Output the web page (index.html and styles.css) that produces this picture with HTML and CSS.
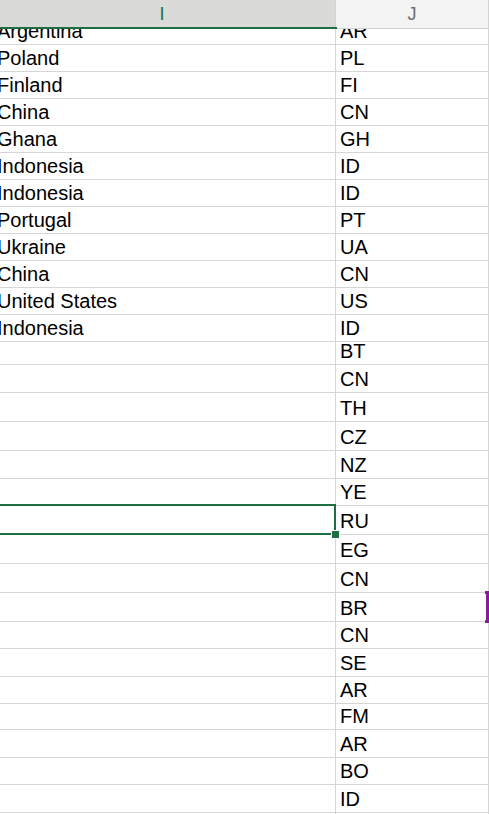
FILE: index.html
```html
<!DOCTYPE html>
<html>
<head>
<meta charset="utf-8">
<link rel="stylesheet" href="styles.css">
</head>
<body>
<div class="sheet">
  <div class="hdr">
    <div class="hcell hsel">I</div>
    <div class="hcell">J</div>
  </div>
  <div class="body">
    <div class="row r16"><div class="cell ci">Argentina</div><div class="cell">AR</div></div>
    <div class="row"><div class="cell ci">Poland</div><div class="cell">PL</div></div>
    <div class="row"><div class="cell ci">Finland</div><div class="cell">FI</div></div>
    <div class="row"><div class="cell ci">China</div><div class="cell">CN</div></div>
    <div class="row"><div class="cell ci">Ghana</div><div class="cell">GH</div></div>
    <div class="row"><div class="cell ci">Indonesia</div><div class="cell">ID</div></div>
    <div class="row"><div class="cell ci">Indonesia</div><div class="cell">ID</div></div>
    <div class="row"><div class="cell ci">Portugal</div><div class="cell">PT</div></div>
    <div class="row"><div class="cell ci">Ukraine</div><div class="cell">UA</div></div>
    <div class="row"><div class="cell ci">China</div><div class="cell">CN</div></div>
    <div class="row"><div class="cell ci">United States</div><div class="cell">US</div></div>
    <div class="row"><div class="cell ci">Indonesia</div><div class="cell">ID</div></div>
    <div class="row r23"><div class="cell ci"></div><div class="cell">BT</div></div>
    <div class="row r28"><div class="cell ci"></div><div class="cell">CN</div></div>
    <div class="row r29"><div class="cell ci"></div><div class="cell">TH</div></div>
    <div class="row r29"><div class="cell ci"></div><div class="cell">CZ</div></div>
    <div class="row r28"><div class="cell ci"></div><div class="cell">NZ</div></div>
    <div class="row"><div class="cell ci"></div><div class="cell">YE</div></div>
    <div class="row r29"><div class="cell ci"></div><div class="cell">RU</div></div>
    <div class="row r29"><div class="cell ci"></div><div class="cell">EG</div></div>
    <div class="row r29"><div class="cell ci"></div><div class="cell">CN</div></div>
    <div class="row r29"><div class="cell ci"></div><div class="cell">BR</div></div>
    <div class="row"><div class="cell ci"></div><div class="cell">CN</div></div>
    <div class="row r28"><div class="cell ci"></div><div class="cell">SE</div></div>
    <div class="row"><div class="cell ci"></div><div class="cell">AR</div></div>
    <div class="row r26"><div class="cell ci"></div><div class="cell">FM</div></div>
    <div class="row r28"><div class="cell ci"></div><div class="cell">AR</div></div>
    <div class="row"><div class="cell ci"></div><div class="cell">BO</div></div>
    <div class="row r28"><div class="cell ci"></div><div class="cell">ID</div></div>
    <div class="row"><div class="cell ci"></div><div class="cell"></div></div>

    <div class="selection"><div class="handle"></div></div>
  </div>
  <div class="cursor"></div>
</div>
</body>
</html>
```
FILE: styles.css
```css
html, body {
  margin: 0;
  padding: 0;
  background: #ffffff;
}

.sheet {
  position: relative;
  width: 489px;
  height: 814px;
  overflow: hidden;
  font-family: "Liberation Sans", Arial, sans-serif;
}

.hdr,
.row {
  display: grid;
  grid-template-columns: 347px 153px;
  margin-left: -11px;
}

.hdr {
  position: relative;
  height: 29px;
}

.hcell {
  box-sizing: border-box;
  height: 29px;
  display: flex;
  align-items: center;
  justify-content: center;
  background: #f3f3f3;
  border-right: 1px solid #d3d3d3;
  border-bottom: 1px solid #d3d3d3;
  color: #6e6e6e;
  font-size: 18px;
  padding-top: 1px;
}

.hsel {
  position: relative;
  background: #dadad8;
  color: #1e6e42;
}

.hsel::after {
  content: "";
  position: absolute;
  left: 0;
  right: -2px;
  bottom: -1px;
  height: 2px;
  background: #1e6e42;
}

.body {
  position: relative;
}

.row {
  height: 27px;
}

.r16 { height: 16px; }
.r23 { height: 23px; }
.r26 { height: 26px; }
.r28 { height: 28px; }
.r29 { height: 29px; }
.r30 { height: 30px; }

.cell {
  box-sizing: border-box;
  display: flex;
  align-items: flex-end;
  overflow: hidden;
  white-space: nowrap;
  border-right: 1px solid #d6d6d6;
  border-bottom: 1px solid #d6d6d6;
  padding: 0 0 3px 4px;
  font-size: 20px;
  line-height: 20px;
  color: #000000;
}

.ci {
  padding-left: 8px;
}

.selection {
  position: absolute;
  box-sizing: border-box;
  left: -10px;
  top: 475px;
  width: 346px;
  height: 31px;
  border: 2px solid #1e6e42;
}

.handle {
  position: absolute;
  right: -5px;
  bottom: -5px;
  width: 7px;
  height: 7px;
  background: #1e6e42;
  box-shadow: 0 0 0 1px #ffffff;
}

.cursor {
  position: absolute;
  left: 486px;
  top: 591px;
  width: 3px;
  height: 32px;
  background: #8a1c9c;
}

.cursor::before,
.cursor::after {
  content: "";
  position: absolute;
  left: -1px;
  width: 4px;
  height: 3px;
  background: #8a1c9c;
}

.cursor::before { top: 0; }
.cursor::after { bottom: 0; }
```
